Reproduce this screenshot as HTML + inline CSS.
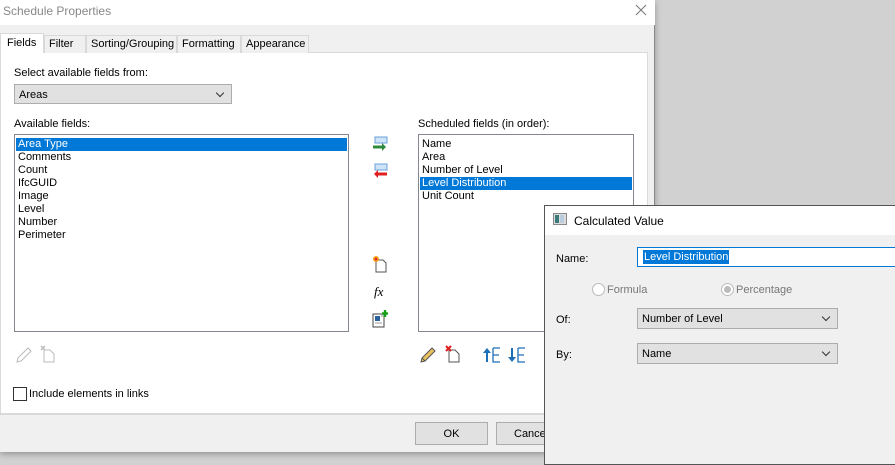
<!DOCTYPE html>
<html><head><style>
*{margin:0;padding:0;box-sizing:border-box}
body{width:895px;height:461px;overflow:hidden;background:#d1d1d1;font-family:"Liberation Sans",sans-serif;font-size:11px;color:#000;position:relative}
.a{position:absolute}
.list div{height:13px;line-height:13px;padding-left:2px;white-space:nowrap}
.sel{background:#0078d7;color:#fff}
.tab{position:absolute;top:35px;height:18px;border:1px solid #d9d9d9;border-bottom:none;background:#f0f0f0;line-height:17px;padding-left:4px}
.combo{position:absolute;background:#e1e1e1;border:1px solid #adadad;line-height:20px;padding-left:4px}
.chev{position:absolute;right:8px;top:5px;width:6px;height:6px;border-right:1px solid #333;border-bottom:1px solid #333;transform:rotate(45deg)}
</style></head><body>
<div class="a" style="left:0;top:0;width:655px;height:452px;background:#f0f0f0;border-right:1px solid #888;box-shadow:0 2px 6px rgba(0,0,0,.3)"></div>
<div class="a" style="left:0;top:0;width:655px;height:25px;background:#fff"></div>
<div class="a" style="left:3px;top:4px;font-size:12px;color:#888">Schedule Properties</div>
<svg class="a" style="left:634px;top:3px" width="14" height="14"><path d="M2 2L12 12M12 2L2 12" stroke="#777" stroke-width="1"/></svg>
<div class="a" style="left:0;top:52px;width:648px;height:362px;background:#fff;border:1px solid #d9d9d9"></div>
<div class="tab" style="left:0;top:33px;width:44px;height:20px;background:#fff;border-color:#d9d9d9;padding-left:6px;line-height:19px">Fields</div>
<div class="tab" style="left:44px;width:42px">Filter</div>
<div class="tab" style="left:86px;width:91px">Sorting/Grouping</div>
<div class="tab" style="left:177px;width:64px">Formatting</div>
<div class="tab" style="left:241px;width:68px">Appearance</div>
<div class="a" style="left:14px;top:67px">Select available fields from:</div>
<div class="combo" style="left:14px;top:84px;width:218px;height:20px">Areas<span class="chev"></span></div>
<div class="a" style="left:14px;top:118px">Available fields:</div>
<div class="a list" style="left:14px;top:134px;width:335px;height:198px;border:1px solid #828790;padding:3px 1px">
<div class="sel">Area Type</div><div>Comments</div><div>Count</div><div>IfcGUID</div><div>Image</div><div>Level</div><div>Number</div><div>Perimeter</div></div>
<div class="a" style="left:418px;top:118px">Scheduled fields (in order):</div>
<div class="a list" style="left:418px;top:134px;width:216px;height:198px;border:1px solid #828790;padding:3px 1px">
<div>Name</div><div>Area</div><div>Number of Level</div><div class="sel">Level Distribution</div><div>Unit Count</div></div>
<svg class="a" style="left:372px;top:136px" width="16" height="16"><rect x="3" y="1" width="12" height="6" fill="#cfe4f7" stroke="#6aa0d8"/><path d="M1 11H11" stroke="#2e8b3e" stroke-width="3"/><path d="M10 7L14 11L10 15Z" fill="#2e8b3e"/></svg>
<svg class="a" style="left:372px;top:163px" width="16" height="16"><rect x="3" y="1" width="12" height="6" fill="#cfe4f7" stroke="#6aa0d8"/><path d="M5 11H15" stroke="#e02020" stroke-width="3"/><path d="M6 7L2 11L6 15Z" fill="#e02020"/></svg>
<svg class="a" style="left:372px;top:255px" width="16" height="18"><path d="M4 5H11L14 8V17H4Z" fill="#fff" stroke="#555"/><circle cx="4" cy="4" r="3" fill="#f7a020"/><circle cx="4" cy="4" r="1.3" fill="#e02020"/></svg>
<div class="a" style="left:374px;top:284px;font-family:'Liberation Serif',serif;font-style:italic;font-size:13px">fx</div>
<svg class="a" style="left:372px;top:310px" width="16" height="18"><rect x="1" y="4" width="11" height="13" fill="#fff" stroke="#444"/><rect x="3" y="6" width="5" height="5" fill="#2a5fa0"/><path d="M9 6H11M3 13H10" stroke="#999"/><path d="M13 0V7M10 3.5H16" stroke="#18a018" stroke-width="2.4"/></svg>
<svg class="a" style="left:15px;top:346px" width="18" height="18"><path d="M2 16L3 12L13 2L16 5L6 15Z" fill="none" stroke="#bbb"/></svg>
<svg class="a" style="left:40px;top:345px" width="16" height="18"><path d="M4 5H10L14 9V17H4Z" fill="#fff" stroke="#bbb"/><path d="M1 1L5 5M5 1L1 5" stroke="#bbb" stroke-width="1.5"/></svg>
<svg class="a" style="left:419px;top:346px" width="18" height="18"><path d="M2 16L3 12L13 2L16 5L6 15Z" fill="#e8c060" stroke="#555"/><path d="M3 12L6 15" stroke="#555"/></svg>
<svg class="a" style="left:445px;top:345px" width="16" height="18"><path d="M4 5H10L14 9V17H4Z" fill="#fff" stroke="#555"/><path d="M1 1L6 6M6 1L1 6" stroke="#e02020" stroke-width="2"/></svg>
<svg class="a" style="left:483px;top:347px" width="18" height="16"><path d="M4 1L8 6H5V15H3V6H0Z" fill="#1d6fb8"/><path d="M10 1H17M10 1V15H17M10 8H16" stroke="#1d6fb8" stroke-width="1.3" fill="none"/></svg>
<svg class="a" style="left:508px;top:347px" width="18" height="16"><path d="M4 15L8 10H5V1H3V10H0Z" fill="#1d6fb8"/><path d="M10 1H17M10 1V15H17M10 8H16" stroke="#1d6fb8" stroke-width="1.3" fill="none"/></svg>
<div class="a" style="left:13px;top:387px;width:14px;height:14px;border:1px solid #333;background:#fff"></div>
<div class="a" style="left:29px;top:388px">Include elements in links</div>
<div class="a" style="left:0;top:414px;width:655px;height:1px;background:#d9d9d9"></div>
<div class="a" style="left:496px;top:422px;width:60px;height:23px;background:#e1e1e1;border:1px solid #adadad;line-height:22px;padding-left:17px">Cancel</div>
<div class="a" style="left:415px;top:422px;width:73px;height:23px;background:#e1e1e1;border:1px solid #adadad;text-align:center;line-height:22px">OK</div>
<div class="a" style="left:544px;top:205px;width:355px;height:260px;background:#f0f0f0;border:1px solid #555"></div>
<div class="a" style="left:545px;top:206px;width:350px;height:29px;background:#fff"></div>
<svg class="a" style="left:553px;top:213px" width="14" height="12"><rect x="0.5" y="0.5" width="13" height="11" fill="#ddd" stroke="#888"/><rect x="2" y="2" width="4" height="8" fill="#3a7a7a"/><rect x="7" y="2" width="4" height="8" fill="#bcd"/></svg>
<div class="a" style="left:574px;top:214px;font-size:12px">Calculated Value</div>
<div class="a" style="left:556px;top:253px">Name:</div>
<div class="a" style="left:637px;top:247px;width:260px;height:20px;background:#fff;border:1px solid #0078d7"></div>
<div class="a" style="left:643px;top:250px;background:#0078d7;color:#fff;line-height:14px;padding:0 1px">Level Distribution</div>
<div class="a" style="left:592px;top:283px;width:13px;height:13px;border:1px solid #bbb;border-radius:50%;background:#fff"></div>
<div class="a" style="left:607px;top:284px;color:#777">Formula</div>
<div class="a" style="left:721px;top:283px;width:13px;height:13px;border:1px solid #bbb;border-radius:50%;background:#fff"><div style="margin:2px;width:7px;height:7px;border-radius:50%;background:#bbb"></div></div>
<div class="a" style="left:736px;top:284px;color:#777">Percentage</div>
<div class="a" style="left:556px;top:314px">Of:</div>
<div class="combo" style="left:637px;top:308px;width:201px;height:21px">Number of Level<span class="chev"></span></div>
<div class="a" style="left:556px;top:349px">By:</div>
<div class="combo" style="left:637px;top:343px;width:201px;height:21px">Name<span class="chev"></span></div>
</body></html>
